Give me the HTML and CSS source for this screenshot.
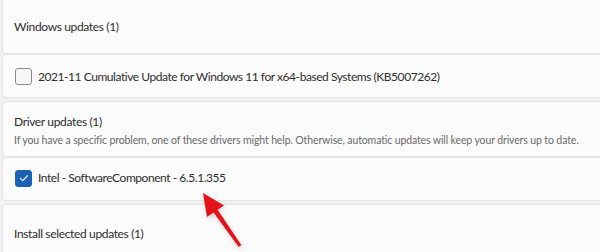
FILE: index.html
```html
<!DOCTYPE html>
<html>
<head>
<meta charset="utf-8">
<link rel="stylesheet" href="styles.css">
</head>
<body>
<div class="list">
  <div class="card card-head first">
    <span class="title">Windows updates (1)</span>
  </div>
  <div class="card card-item item-a">
    <span class="box"></span>
    <span class="label">2021-11 Cumulative Update for Windows 11 for x64-based Systems (KB5007262)</span>
  </div>
  <div class="card card-head two-line gap">
    <span class="title">Driver updates (1)</span>
    <span class="sub">If you have a specific problem, one of these drivers might help. Otherwise, automatic updates will keep your drivers up to date.</span>
  </div>
  <div class="card card-item item-b">
    <span class="box checked">
      <svg viewBox="0 0 16 16" width="12" height="12"><path d="M3.2 8.4 L6.4 11.4 L12.8 4.8" fill="none" stroke="#fff" stroke-width="1.5" stroke-linecap="round" stroke-linejoin="round"/></svg>
    </span>
    <span class="label">Intel - SoftwareComponent - 6.5.1.355</span>
  </div>
  <div class="card card-foot gap">
    <span class="title">Install selected updates (1)</span>
  </div>
</div>
<svg class="arrow" width="600" height="252" viewBox="0 0 600 252">
  <defs>
    <filter id="sh" x="-50%" y="-50%" width="200%" height="200%">
      <feGaussianBlur stdDeviation="2.5"/>
    </filter>
  </defs>
  <polygon points="203,193 224,205.5 217.6,209.8 241.3,245 238.7,246.9 213.6,212.5 207,217" fill="#000" opacity="0.18" filter="url(#sh)" transform="translate(1,2)"/>
  <polygon points="203,193 224,205.5 217.6,209.8 241.3,245 238.7,246.9 213.6,212.5 207,217" fill="#e3121b"/>
</svg>
</body>
</html>
```
FILE: styles.css
```css
html, body {
  margin: 0;
  padding: 0;
  width: 600px;
  height: 252px;
  overflow: hidden;
  background: #f1f1f1;
  font-family: "Lato", "Open Sans", sans-serif;
  color: #2e2e2e;
}
.list {
  display: flex;
  flex-direction: column;
  padding-left: 2px;
  width: 640px;
}
.card {
  box-sizing: border-box;
  background: #fbfbfb;
  border: 1px solid #e4e4e4;
  border-radius: 4px;
  display: flex;
  align-items: center;
  padding-left: 11px;
}
.card.first {
  height: 54px;
  border-top: none;
  border-radius: 0 0 4px 4px;
}
.card.gap {
  margin-top: 3px;
}
.card-item {
  height: 44px;
  padding-left: 12px;
  gap: 6px;
}
.item-a {
  padding-top: 1px;
}
.item-b {
  padding-bottom: 2px;
}
.two-line {
  height: 56px;
  flex-direction: column;
  align-items: flex-start;
  justify-content: flex-start;
  padding-top: 11px;
}
.card-foot {
  height: 60px;
  align-items: flex-start;
  padding-top: 20px;
}
.title {
  font-size: 12px;
  letter-spacing: -0.35px;
  line-height: 18px;
}
.sub {
  font-size: 10.5px;
  letter-spacing: -0.12px;
  color: #6a6a6a;
  line-height: 15px;
  margin-top: 2px;
}
.label {
  font-size: 12px;
  letter-spacing: -0.45px;
  line-height: 18px;
}
.box {
  box-sizing: border-box;
  width: 17px;
  height: 17px;
  border: 1px solid #8c8c8c;
  border-radius: 3px;
  background: #f6f6f6;
  display: flex;
  align-items: center;
  justify-content: center;
  flex: none;
}
.box.checked {
  background: #1b62b5;
  border-color: #1b62b5;
}
.arrow {
  position: absolute;
  left: 0;
  top: 0;
  pointer-events: none;
}
```
